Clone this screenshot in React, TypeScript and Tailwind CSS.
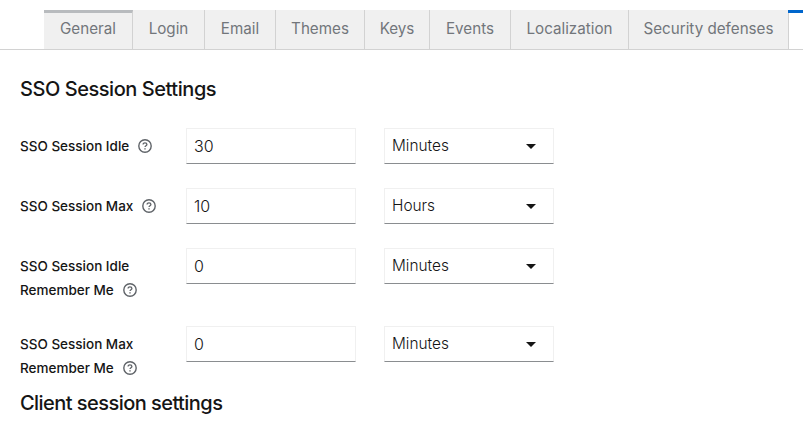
const tabs = [
  { name: 'General', width: 'w-[89px]', active: true },
  { name: 'Login', width: 'w-[72px]' },
  { name: 'Email', width: 'w-[71px]' },
  { name: 'Themes', width: 'w-[89px]' },
  { name: 'Keys', width: 'w-[65px]' },
  { name: 'Events', width: 'w-[81px]' },
  { name: 'Localization', width: 'w-[118px]' },
  { name: 'Security defenses', width: 'w-[160px]' },
];

const rows = [
  { lines: ['SSO Session Idle'], value: '30', unit: 'Minutes' },
  { lines: ['SSO Session Max'], value: '10', unit: 'Hours' },
  { lines: ['SSO Session Idle', 'Remember Me'], value: '0', unit: 'Minutes' },
  { lines: ['SSO Session Max', 'Remember Me'], value: '0', unit: 'Minutes' },
];

function HelpIcon() {
  return (
    <svg viewBox="0 0 14 14" className="w-[14px] h-[14px] ml-[9px] shrink-0" fill="none" stroke="#5f6368">
      <circle cx="7" cy="7" r="6.2" strokeWidth="1.4" />
      <path d="M5.1 5.6c0-1.2.8-1.8 1.9-1.8s1.9.6 1.9 1.6c0 1.3-1.9 1.3-1.9 2.7" strokeWidth="1.3" />
      <path d="M7 9.3v1.3" strokeWidth="1.4" />
    </svg>
  );
}

function Row({ lines, value, unit }: { lines: string[]; value: string; unit: string }) {
  return (
    <div className="flex items-start mb-[24px]">
      <div className="w-[166px] pt-[6px] text-[13.5px] leading-[24px] font-medium text-[#151515]">
        {lines.map((line, i) => (
          <div key={line} className="flex items-center">
            {line}
            {i === lines.length - 1 && <HelpIcon />}
          </div>
        ))}
      </div>
      <div className="w-[170px] h-[36px] flex items-center px-[7px] border border-[#f0f0f0] border-b-[#8a8d90] text-[16px] font-light text-[#151515]">
        {value}
      </div>
      <div className="w-[170px] h-[36px] ml-[28px] flex items-center justify-between pl-[7px] pr-[17px] border border-[#f0f0f0] border-b-[#8a8d90] text-[15.4px] font-light text-[#151515]">
        {unit}
        <span className="w-0 h-0 border-x-[5px] border-x-transparent border-t-[5px] border-t-[#151515]" />
      </div>
    </div>
  );
}

export default function App() {
  return (
    <div className="w-[803px] h-[428px] overflow-hidden bg-white font-['Inter','Noto_Sans',sans-serif]">
      {/* tabs */}
      <div className="pt-[10px] h-[50px] border-b border-[#d2d2d2] flex">
        <div className="flex pl-[44px] h-[40px]">
          {tabs.map((tab) => (
            <div
              key={tab.name}
              className={`${tab.width} h-[40px] flex items-center justify-center bg-[#f0f0f0] border-r border-b border-[#d2d2d2] text-[15.2px] text-[#72767b] ${
                tab.active ? 'border-t-[3px] border-t-[#b8bbbe] pb-[3px]' : ''
              }`}
            >
              {tab.name}
            </div>
          ))}
        </div>
        <div className="w-[15px] h-[3px] -ml-px bg-[#06c]" />
      </div>

      <div className="pl-[20px]">
        <h2 className="mt-[26px] mb-[26px] text-[20px] leading-[26px] font-[450] tracking-[-0.45px] text-[#151515]">SSO Session Settings</h2>
        {rows.map((row, i) => (
          <Row key={i} {...row} />
        ))}
        <h2 className="-mt-[14px] text-[20px] leading-[26px] font-[450] tracking-[-0.55px] text-[#151515]">Client session settings</h2>
      </div>
    </div>
  );
}
